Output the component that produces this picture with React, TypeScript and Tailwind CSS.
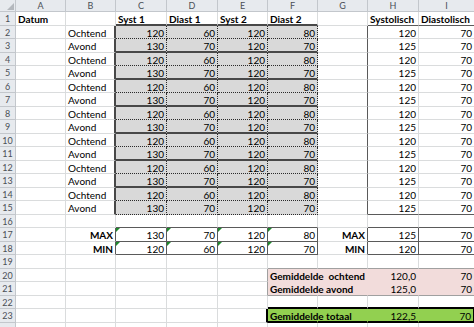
import React from 'react';

type B = 'grid' | 'dark' | 'thick' | 'dotted' | 'gray' | 'fp' | 'fg' | 'black2';

const RC: Record<B, string> = {
  grid: 'border-r border-r-[#dadcdd]',
  dark: 'border-r border-r-[#5a5a5a]',
  thick: 'border-r-2 border-r-[#484848]',
  dotted: 'border-r border-r-[#2a2a2a] [border-right-style:dotted]',
  gray: 'border-r border-r-[#a0a0a0]',
  fp: 'border-r border-r-[#f2dcdb]',
  fg: 'border-r border-r-[#92d050]',
  black2: 'border-r-2 border-r-black',
};
const BC: Record<B, string> = {
  grid: 'border-b border-b-[#dadcdd]',
  dark: 'border-b border-b-[#5a5a5a]',
  thick: 'border-b-2 border-b-[#484848]',
  dotted: 'border-b border-b-[#2a2a2a] [border-bottom-style:dotted]',
  gray: 'border-b border-b-[#a0a0a0]',
  fp: 'border-b border-b-[#f2dcdb]',
  fg: 'border-b border-b-[#92d050]',
  black2: 'border-b-2 border-b-black',
};

const WIDTHS = [50, 50, 51, 51, 50, 50, 50, 51, 56];
const LETTERS = ['A', 'B', 'C', 'D', 'E', 'F', 'G', 'H', 'I'];

type Info = { text: string; right: boolean; bold: boolean; bg: string; r: B; b: B; tri: boolean };

function info(row: number, c: number): Info {
  let text = '';
  let right = false;
  let bold = false;
  let bg = '';
  let r: B = 'grid';
  let b: B = 'grid';
  let tri = false;
  const CF = c >= 2 && c <= 5;
  const HI = c === 7 || c === 8;

  if (row === 1) {
    const h: Record<number, string> = { 0: 'Datum', 2: 'Syst 1', 3: 'Diast 1', 4: 'Syst 2', 5: 'Diast 2', 7: 'Systolisch', 8: 'Diastolisch' };
    if (h[c]) { text = h[c]; bold = true; }
  } else if (row >= 2 && row <= 15) {
    const och = row % 2 === 0;
    const vals = och ? ['', 'Ochtend', '120', '60', '120', '80', '', '120', '70'] : ['', 'Avond', '130', '70', '120', '70', '', '125', '70'];
    text = vals[c];
    right = c >= 2;
  } else if (row === 17 || row === 18) {
    const vals = row === 17 ? ['', 'MAX', '130', '70', '120', '80', 'MAX', '125', '70'] : ['', 'MIN', '120', '60', '120', '70', 'MIN', '120', '70'];
    text = vals[c];
    right = true;
    bold = c === 1 || c === 6;
    tri = CF;
  } else if (row === 20 || row === 21 || row === 23) {
    const lbl = row === 20 ? 'Gemiddelde\u00a0 ochtend' : row === 21 ? 'Gemiddelde avond' : 'Gemiddelde totaal';
    const h = row === 20 ? '120,0' : row === 21 ? '125,0' : '122,5';
    if (c === 5) { text = lbl; bold = true; }
    if (c === 7) { text = h; right = true; }
    if (c === 8) { text = '70'; right = true; }
  }

  if (CF && row >= 2 && row <= 15) bg = 'bg-[#d9d9d9]';
  if (c >= 5 && (row === 20 || row === 21)) bg = 'bg-[#f2dcdb]';
  if (c >= 5 && row === 23) bg = 'bg-[#92d050]';

  if (row >= 2 && row <= 15) {
    if (c === 1) r = 'thick';
    if (CF) r = 'dotted';
    if (c === 6 || c === 8) r = 'dark';
  }
  if (row === 17 || row === 18) {
    if (c >= 1) r = 'dark';
  }
  if (row === 20 || row === 21) {
    if (c === 4 || c === 8) r = 'gray';
    if (c >= 5 && c <= 7) r = 'fp';
  }
  if (row === 23) {
    if (c === 4 || c === 8) r = 'black2';
    if (c >= 5 && c <= 7) r = 'fg';
  }

  if (CF) {
    if (row === 1) b = 'thick';
    if (row >= 2 && row <= 15) b = row % 2 === 0 || row === 15 ? 'dotted' : 'thick';
  }
  if (HI && (row === 1 || row === 15)) b = 'dark';
  if ((CF || HI) && (row === 16 || row === 17 || row === 18)) b = 'dark';
  if (c >= 5) {
    if (row === 19 || row === 21) b = 'gray';
    if (row === 20) b = 'fp';
    if (row === 22 || row === 23) b = 'black2';
  }

  return { text, right, bold, bg, r, b, tri };
}

const HEIGHTS: number[] = [];
for (let i = 1; i <= 23; i++) HEIGHTS.push(i % 2 === 1 ? 14 : 13);

export default function App() {
  return (
    <div
      className="w-[474px] h-[327px] overflow-hidden bg-white text-black"
      style={{ fontFamily: 'Lato, "Liberation Sans", Arial, sans-serif' }}
    >
      <div className="flex h-[12px]">
        <div className="relative w-[16px] shrink-0 bg-[#e7eaee] border-r border-b border-[#c3c7cc]">
          <svg className="absolute right-[1px] bottom-[1px]" width="7" height="7" viewBox="0 0 7 7">
            <polygon points="7,0 7,7 0,7" fill="#b4b8bd" />
          </svg>
        </div>
        {LETTERS.map((l, i) => (
          <div
            key={l}
            style={{ width: WIDTHS[i] }}
            className="shrink-0 bg-[#e7eaee] border-r border-b border-[#c3c7cc] flex items-center justify-center text-[9px] leading-none text-[#4a4f56]"
          >
            {l}
          </div>
        ))}
      </div>
      {HEIGHTS.map((h, ri) => {
        const row = ri + 1;
        return (
          <div key={row} className="flex" style={{ height: h }}>
            <div className="w-[16px] shrink-0 bg-[#e7eaee] border-r border-b border-[#c3c7cc] flex items-center justify-center text-[9px] leading-none text-[#4a4f56]">
              {row}
            </div>
            {WIDTHS.map((w, c) => {
              const inf = info(row, c);
              return (
                <div
                  key={c}
                  style={{ width: w }}
                  className={`relative shrink-0 flex items-center whitespace-nowrap text-[10px] leading-none ${inf.right ? 'justify-end pr-[2px]' : 'justify-start pl-[2px]'} ${inf.bold ? 'font-bold' : ''} ${inf.bg} ${RC[inf.r]} ${BC[inf.b]}`}
                >
                  {inf.tri && (
                    <svg className="absolute left-0 top-0" width="4" height="4" viewBox="0 0 4 4">
                      <polygon points="0,0 4,0 0,4" fill="#1f8a2e" />
                    </svg>
                  )}
                  {inf.text && <span className="relative z-10 pt-[1px]">{inf.text}</span>}
                </div>
              );
            })}
          </div>
        );
      })}
      <div className="flex h-[10px]">
        <div className="w-[16px] shrink-0 bg-[#e7eaee] border-r border-[#c3c7cc]" />
        {WIDTHS.map((w, c) => (
          <div key={c} style={{ width: w }} className="shrink-0 border-r border-r-[#dadcdd]" />
        ))}
      </div>
    </div>
  );
}
